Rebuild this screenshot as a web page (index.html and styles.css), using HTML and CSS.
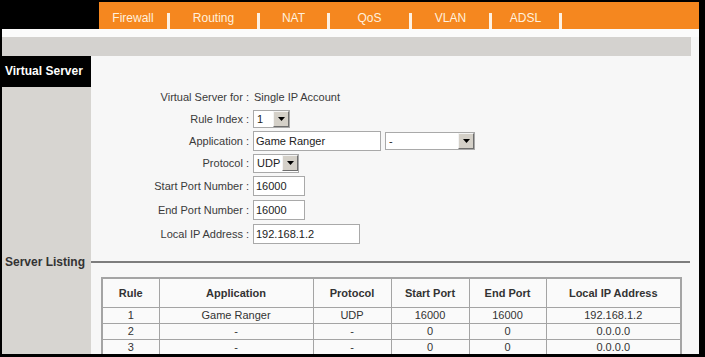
FILE: index.html
```html
<!DOCTYPE html>
<html lang="en">
<head>
    <meta charset="UTF-8">
    <title>Virtual Server</title>
    <link rel="stylesheet" href="styles.css">
</head>
<body>
    <div class="nav">
        <span class="tab tab-firewall">Firewall</span><span class="sep"></span>
        <span class="tab tab-routing">Routing</span><span class="sep"></span>
        <span class="tab tab-nat">NAT</span><span class="sep"></span>
        <span class="tab tab-qos">QoS</span><span class="sep"></span>
        <span class="tab tab-vlan">VLAN</span><span class="sep"></span>
        <span class="tab tab-adsl">ADSL</span><span class="sep"></span>
    </div>

    <div class="main">
        <div class="subbar"></div>

        <div class="body">
            <div class="sidebar">
                <div class="side-active">Virtual Server</div>
                <div class="side-title">Server Listing</div>
            </div>

            <div class="content">
                <div class="form">
                    <div class="row">
                        <span class="lbl">Virtual Server for :</span>
                        <span class="val">Single IP Account</span>
                    </div>
                    <div class="row">
                        <span class="lbl">Rule Index :</span>
                        <span class="sel sel-rule"><span class="sel-val">1</span><span class="sel-btn"><svg width="7" height="4" viewBox="0 0 7 4"><path d="M0 0h7L3.5 4z" fill="#000"/></svg></span></span>
                    </div>
                    <div class="row">
                        <span class="lbl">Application :</span>
                        <input class="txt txt-app" type="text" value="Game Ranger">
                        <span class="sel sel-app"><span class="sel-val">-</span><span class="sel-btn"><svg width="7" height="4" viewBox="0 0 7 4"><path d="M0 0h7L3.5 4z" fill="#000"/></svg></span></span>
                    </div>
                    <div class="row">
                        <span class="lbl">Protocol :</span>
                        <span class="sel sel-proto"><span class="sel-val">UDP</span><span class="sel-btn"><svg width="7" height="4" viewBox="0 0 7 4"><path d="M0 0h7L3.5 4z" fill="#000"/></svg></span></span>
                    </div>
                    <div class="row tall">
                        <span class="lbl">Start Port Number :</span>
                        <input class="txt txt-port" type="text" value="16000">
                    </div>
                    <div class="row tall">
                        <span class="lbl">End Port Number :</span>
                        <input class="txt txt-port" type="text" value="16000">
                    </div>
                    <div class="row tall">
                        <span class="lbl">Local IP Address :</span>
                        <input class="txt txt-ip" type="text" value="192.168.1.2">
                    </div>
                </div>

                <div class="divider"></div>

                <table class="listing">
                    <colgroup>
                        <col class="c-rule">
                        <col class="c-app">
                        <col class="c-proto">
                        <col class="c-start">
                        <col class="c-end">
                        <col class="c-ip">
                    </colgroup>
                    <tr>
                        <th>Rule</th>
                        <th>Application</th>
                        <th>Protocol</th>
                        <th>Start Port</th>
                        <th>End Port</th>
                        <th>Local IP Address</th>
                    </tr>
                    <tr>
                        <td>1</td>
                        <td>Game Ranger</td>
                        <td>UDP</td>
                        <td>16000</td>
                        <td>16000</td>
                        <td>192.168.1.2</td>
                    </tr>
                    <tr>
                        <td>2</td>
                        <td>-</td>
                        <td>-</td>
                        <td>0</td>
                        <td>0</td>
                        <td>0.0.0.0</td>
                    </tr>
                    <tr>
                        <td>3</td>
                        <td>-</td>
                        <td>-</td>
                        <td>0</td>
                        <td>0</td>
                        <td>0.0.0.0</td>
                    </tr>
                </table>
            </div>
        </div>
    </div>
</body>
</html>
```

FILE: styles.css
```css
body {
    margin: 0;
    background-color: #000;
    font-family: "Liberation Sans", Arial, sans-serif;
    font-size: 11px;
    color: #333;
    width: 705px;
    height: 357px;
    overflow: hidden;
}

.nav {
    display: flex;
    margin: 2px 0 0 99px;
    width: 600px;
    height: 27px;
    background-color: #f5871f;
}
.tab {
    display: block;
    padding-top: 9px;
    text-align: center;
    font-size: 12px;
    color: #fff0de;
}
.tab-firewall { width: 68px; }
.tab-routing { width: 87px; }
.tab-nat { width: 67px; }
.tab-qos { width: 79px; }
.tab-vlan { width: 77px; }
.tab-adsl { width: 67px; }
.sep {
    align-self: flex-end;
    width: 3px;
    height: 16px;
    background-color: #fdf1e3;
}

.main {
    margin-left: 2px;
    width: 697px;
    height: 317px;
    overflow: hidden;
    background-color: #f7f7f7;
    border-top: 8px solid #fbfbfb;
}
.subbar {
    width: 689px;
    height: 19px;
    background-color: #d4d2cf;
}

.body {
    display: flex;
    height: 298px;
}
.sidebar {
    width: 89px;
    flex-shrink: 0;
    background-color: #d7d5d1;
}
.side-active {
    height: 31px;
    line-height: 31px;
    padding-left: 3px;
    background-color: #000;
    color: #fff;
    font-size: 12px;
    font-weight: bold;
}
.side-title {
    margin-top: 168px;
    padding-left: 3px;
    line-height: 14px;
    font-size: 12px;
    font-weight: bold;
    color: #333;
}

.content {
    flex-grow: 1;
}
.form {
    padding-top: 30px;
}
.row {
    display: flex;
    align-items: center;
    height: 22px;
}
.row.tall {
    height: 24px;
}
.lbl {
    width: 158px;
    text-align: right;
    color: #3a3a3a;
}
.val {
    margin-left: 5px;
    color: #3a3a3a;
}

.txt {
    box-sizing: border-box;
    height: 20px;
    margin: 0 0 0 4px;
    padding: 0 2px;
    border: 1px solid #a9a9a9;
    background-color: #fff;
    font-family: "Liberation Sans", Arial, sans-serif;
    font-size: 11px;
    color: #222;
    outline: none;
}
.txt-app { width: 128px; }
.txt-port { width: 52px; }
.txt-ip { width: 107px; }

.sel {
    box-sizing: border-box;
    display: flex;
    align-items: center;
    justify-content: space-between;
    height: 18px;
    margin-left: 4px;
    border: 1px solid #a9a9a9;
    background-color: #fff;
    color: #222;
}
.sel-val {
    padding-left: 3px;
}
.sel-btn {
    box-sizing: border-box;
    display: flex;
    align-items: center;
    justify-content: center;
    width: 16px;
    height: 16px;
    background-color: #d4d0c8;
    border: 1px solid;
    border-color: #f4f4f4 #6e6e6e #6e6e6e #f4f4f4;
}
.sel-rule { width: 37px; }
.sel-app { width: 90px; }
.sel-proto { width: 46px; height: 19px; }

.divider {
    margin: 15px 9px 0 0;
    height: 2px;
    background-color: #7d7d7d;
}

.listing {
    margin: 14px 0 0 10px;
    width: 579px;
    border-collapse: collapse;
    border: 2px solid #a4a4a4;
    background-color: #fafafa;
    table-layout: fixed;
}
.c-rule { width: 57px; }
.c-app { width: 154px; }
.c-proto { width: 78px; }
.c-start { width: 78px; }
.c-end { width: 77px; }
.c-ip { width: 135px; }
.listing th,
.listing td {
    border: 1px solid #a4a4a4;
    padding: 0;
    text-align: center;
    color: #333;
}
.listing th {
    height: 28px;
    font-weight: bold;
}
.listing td {
    height: 15px;
    line-height: 15px;
}
```
